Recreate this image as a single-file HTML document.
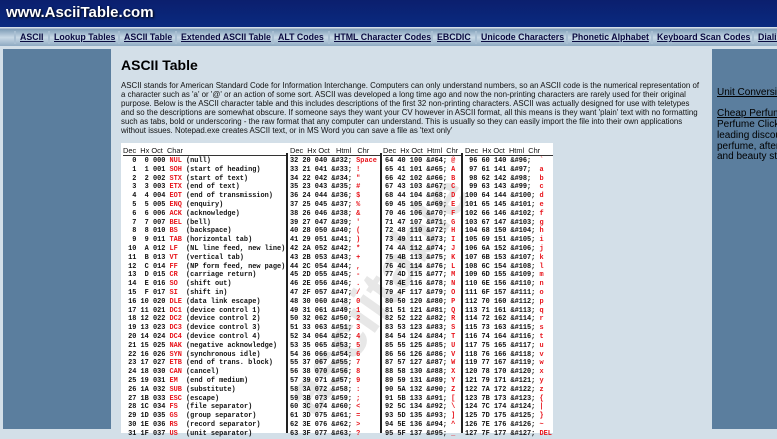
<!DOCTYPE html>
<html><head><meta charset="utf-8"><style>
*{margin:0;padding:0;box-sizing:border-box}
body{width:777px;height:423px;overflow:hidden;background:#d3dfe8;font-family:"Liberation Sans",sans-serif;position:relative}
#hd{position:absolute;left:0;top:0;width:777px;height:27px;background:linear-gradient(#0b1f6e,#0a2a80);}
#hd span{position:absolute;left:6px;top:4px;color:#fff;font-size:15px;font-weight:bold;text-shadow:1px 1px 2px #000}
#nav{position:absolute;left:0;top:28px;width:777px;height:18px;background:linear-gradient(#7d9cb6,#c9d9e6 50%,#8eaac2);border-top:1px solid #aabbd0;white-space:nowrap;font-size:8.8px;font-weight:bold}
#nav a{position:absolute;top:3px;color:#0a0a40;text-decoration:underline}
#nav i{position:absolute;top:2px;width:2px;height:13px;background:#a9bfd2}
#ls{position:absolute;left:3px;top:49px;width:108px;height:380px;background:#5b7e9e}
#rs{position:absolute;left:712px;top:49px;width:70px;height:380px;background:#5b7e9e;font-size:10px;color:#000;line-height:10.7px;padding-left:5px;white-space:nowrap;overflow:hidden}
h1{position:absolute;left:121px;top:57px;font-size:14px;font-weight:bold;color:#000}
#p{position:absolute;left:121px;top:81px;width:583px;font-size:7.9px;line-height:9px;color:#111}
#tb{position:absolute;left:121px;top:143px;width:432px;height:290px;background:#fff}
pre{position:absolute;font-family:"Liberation Mono",monospace;font-weight:bold;font-size:6.9px;line-height:8.8px;color:#111}
.r{color:#e8141b}
.h{position:absolute;top:146px;font-size:7.4px;font-family:"Liberation Sans",sans-serif;color:#111;border-bottom:1px solid #333;white-space:pre;line-height:9px}
.v{position:absolute;top:153px;width:1.5px;height:280px;background:#222}
#wm{position:absolute;left:240px;top:260px;font-size:60px;color:rgba(120,120,120,0.18);transform:rotate(-55deg);font-weight:bold;font-family:"Liberation Sans",sans-serif}
</style></head><body>
<div id="hd"><span>www.AsciiTable.com</span></div>
<div id="nav">
<i style="left:14px"></i><a style="left:20px">ASCII</a>
<i style="left:48px"></i><a style="left:54px">Lookup Tables</a>
<i style="left:118px"></i><a style="left:124px">ASCII Table</a>
<i style="left:175px"></i><a style="left:181px">Extended ASCII Table</a>
<i style="left:272px"></i><a style="left:278px">ALT Codes</a>
<i style="left:328px"></i><a style="left:334px">HTML Character Codes</a>
<i style="left:431px"></i><a style="left:437px">EBCDIC</a>
<i style="left:475px"></i><a style="left:481px">Unicode Characters</a>
<i style="left:566px"></i><a style="left:572px">Phonetic Alphabet</a>
<i style="left:651px"></i><a style="left:657px">Keyboard Scan Codes</a>
<i style="left:752px"></i><a style="left:758px">Dialing</a>
</div>
<div id="ls"></div>
<div id="rs"><div style="height:39px"></div><u>Unit Conversion</u><br><br><u>Cheap Perfume</u><br>Perfume Click<br>leading discou<br>perfume, after<br>and beauty st</div>
<h1>ASCII Table</h1>
<div id="p">ASCII stands for American Standard Code for Information Interchange. Computers can only understand numbers, so an ASCII code is the numerical representation of a character such as 'a' or '@' or an action of some sort. ASCII was developed a long time ago and now the non-printing characters are rarely used for their original purpose. Below is the ASCII character table and this includes descriptions of the first 32 non-printing characters. ASCII was actually designed for use with teletypes and so the descriptions are somewhat obscure. If someone says they want your CV however in ASCII format, all this means is they want 'plain' text with no formatting such as tabs, bold or underscoring - the raw format that any computer can understand. This is usually so they can easily import the file into their own applications without issues. Notepad.exe creates ASCII text, or in MS Word you can save a file as 'text only'</div>
<div id="tb"></div>
<div id="wm">asciitable</div>
<div class="h" style="left:123px;width:164px">Dec  Hx Oct  Char</div>
<div class="h" style="left:290px;width:91px">Dec  Hx Oct   Html   Chr</div>
<div class="h" style="left:383px;width:78px">Dec  Hx Oct  Html  Chr</div>
<div class="h" style="left:465px;width:88px">Dec  Hx Oct  Html  Chr</div>
<div class="v" style="left:286px"></div><div class="v" style="left:380px"></div><div class="v" style="left:461px"></div>
<pre style="left:124px;top:157px">  0  0 000 <span class="r">NUL</span> (null)
  1  1 001 <span class="r">SOH</span> (start of heading)
  2  2 002 <span class="r">STX</span> (start of text)
  3  3 003 <span class="r">ETX</span> (end of text)
  4  4 004 <span class="r">EOT</span> (end of transmission)
  5  5 005 <span class="r">ENQ</span> (enquiry)
  6  6 006 <span class="r">ACK</span> (acknowledge)
  7  7 007 <span class="r">BEL</span> (bell)
  8  8 010 <span class="r">BS</span>  (backspace)
  9  9 011 <span class="r">TAB</span> (horizontal tab)
 10  A 012 <span class="r">LF</span>  (NL line feed, new line)
 11  B 013 <span class="r">VT</span>  (vertical tab)
 12  C 014 <span class="r">FF</span>  (NP form feed, new page)
 13  D 015 <span class="r">CR</span>  (carriage return)
 14  E 016 <span class="r">SO</span>  (shift out)
 15  F 017 <span class="r">SI</span>  (shift in)
 16 10 020 <span class="r">DLE</span> (data link escape)
 17 11 021 <span class="r">DC1</span> (device control 1)
 18 12 022 <span class="r">DC2</span> (device control 2)
 19 13 023 <span class="r">DC3</span> (device control 3)
 20 14 024 <span class="r">DC4</span> (device control 4)
 21 15 025 <span class="r">NAK</span> (negative acknowledge)
 22 16 026 <span class="r">SYN</span> (synchronous idle)
 23 17 027 <span class="r">ETB</span> (end of trans. block)
 24 18 030 <span class="r">CAN</span> (cancel)
 25 19 031 <span class="r">EM</span>  (end of medium)
 26 1A 032 <span class="r">SUB</span> (substitute)
 27 1B 033 <span class="r">ESC</span> (escape)
 28 1C 034 <span class="r">FS</span>  (file separator)
 29 1D 035 <span class="r">GS</span>  (group separator)
 30 1E 036 <span class="r">RS</span>  (record separator)
 31 1F 037 <span class="r">US</span>  (unit separator)</pre>
<pre style="left:290px;top:157px">32 20 040 &amp;#32; <span class="r">Space</span>
33 21 041 &amp;#33; <span class="r">!</span>
34 22 042 &amp;#34; <span class="r">"</span>
35 23 043 &amp;#35; <span class="r">#</span>
36 24 044 &amp;#36; <span class="r">$</span>
37 25 045 &amp;#37; <span class="r">%</span>
38 26 046 &amp;#38; <span class="r">&amp;</span>
39 27 047 &amp;#39; <span class="r">'</span>
40 28 050 &amp;#40; <span class="r">(</span>
41 29 051 &amp;#41; <span class="r">)</span>
42 2A 052 &amp;#42; <span class="r">*</span>
43 2B 053 &amp;#43; <span class="r">+</span>
44 2C 054 &amp;#44; <span class="r">,</span>
45 2D 055 &amp;#45; <span class="r">-</span>
46 2E 056 &amp;#46; <span class="r">.</span>
47 2F 057 &amp;#47; <span class="r">/</span>
48 30 060 &amp;#48; <span class="r">0</span>
49 31 061 &amp;#49; <span class="r">1</span>
50 32 062 &amp;#50; <span class="r">2</span>
51 33 063 &amp;#51; <span class="r">3</span>
52 34 064 &amp;#52; <span class="r">4</span>
53 35 065 &amp;#53; <span class="r">5</span>
54 36 066 &amp;#54; <span class="r">6</span>
55 37 067 &amp;#55; <span class="r">7</span>
56 38 070 &amp;#56; <span class="r">8</span>
57 39 071 &amp;#57; <span class="r">9</span>
58 3A 072 &amp;#58; <span class="r">:</span>
59 3B 073 &amp;#59; <span class="r">;</span>
60 3C 074 &amp;#60; <span class="r">&lt;</span>
61 3D 075 &amp;#61; <span class="r">=</span>
62 3E 076 &amp;#62; <span class="r">&gt;</span>
63 3F 077 &amp;#63; <span class="r">?</span></pre>
<pre style="left:385px;top:157px">64 40 100 &amp;#64; <span class="r">@</span>
65 41 101 &amp;#65; <span class="r">A</span>
66 42 102 &amp;#66; <span class="r">B</span>
67 43 103 &amp;#67; <span class="r">C</span>
68 44 104 &amp;#68; <span class="r">D</span>
69 45 105 &amp;#69; <span class="r">E</span>
70 46 106 &amp;#70; <span class="r">F</span>
71 47 107 &amp;#71; <span class="r">G</span>
72 48 110 &amp;#72; <span class="r">H</span>
73 49 111 &amp;#73; <span class="r">I</span>
74 4A 112 &amp;#74; <span class="r">J</span>
75 4B 113 &amp;#75; <span class="r">K</span>
76 4C 114 &amp;#76; <span class="r">L</span>
77 4D 115 &amp;#77; <span class="r">M</span>
78 4E 116 &amp;#78; <span class="r">N</span>
79 4F 117 &amp;#79; <span class="r">O</span>
80 50 120 &amp;#80; <span class="r">P</span>
81 51 121 &amp;#81; <span class="r">Q</span>
82 52 122 &amp;#82; <span class="r">R</span>
83 53 123 &amp;#83; <span class="r">S</span>
84 54 124 &amp;#84; <span class="r">T</span>
85 55 125 &amp;#85; <span class="r">U</span>
86 56 126 &amp;#86; <span class="r">V</span>
87 57 127 &amp;#87; <span class="r">W</span>
88 58 130 &amp;#88; <span class="r">X</span>
89 59 131 &amp;#89; <span class="r">Y</span>
90 5A 132 &amp;#90; <span class="r">Z</span>
91 5B 133 &amp;#91; <span class="r">[</span>
92 5C 134 &amp;#92; <span class="r">\</span>
93 5D 135 &amp;#93; <span class="r">]</span>
94 5E 136 &amp;#94; <span class="r">^</span>
95 5F 137 &amp;#95; <span class="r">_</span></pre>
<pre style="left:465px;top:157px"> 96 60 140 &amp;#96;  <span class="r">`</span>
 97 61 141 &amp;#97;  <span class="r">a</span>
 98 62 142 &amp;#98;  <span class="r">b</span>
 99 63 143 &amp;#99;  <span class="r">c</span>
100 64 144 &amp;#100; <span class="r">d</span>
101 65 145 &amp;#101; <span class="r">e</span>
102 66 146 &amp;#102; <span class="r">f</span>
103 67 147 &amp;#103; <span class="r">g</span>
104 68 150 &amp;#104; <span class="r">h</span>
105 69 151 &amp;#105; <span class="r">i</span>
106 6A 152 &amp;#106; <span class="r">j</span>
107 6B 153 &amp;#107; <span class="r">k</span>
108 6C 154 &amp;#108; <span class="r">l</span>
109 6D 155 &amp;#109; <span class="r">m</span>
110 6E 156 &amp;#110; <span class="r">n</span>
111 6F 157 &amp;#111; <span class="r">o</span>
112 70 160 &amp;#112; <span class="r">p</span>
113 71 161 &amp;#113; <span class="r">q</span>
114 72 162 &amp;#114; <span class="r">r</span>
115 73 163 &amp;#115; <span class="r">s</span>
116 74 164 &amp;#116; <span class="r">t</span>
117 75 165 &amp;#117; <span class="r">u</span>
118 76 166 &amp;#118; <span class="r">v</span>
119 77 167 &amp;#119; <span class="r">w</span>
120 78 170 &amp;#120; <span class="r">x</span>
121 79 171 &amp;#121; <span class="r">y</span>
122 7A 172 &amp;#122; <span class="r">z</span>
123 7B 173 &amp;#123; <span class="r">{</span>
124 7C 174 &amp;#124; <span class="r">|</span>
125 7D 175 &amp;#125; <span class="r">}</span>
126 7E 176 &amp;#126; <span class="r">~</span>
127 7F 177 &amp;#127; <span class="r">DEL</span></pre>
</body></html>
